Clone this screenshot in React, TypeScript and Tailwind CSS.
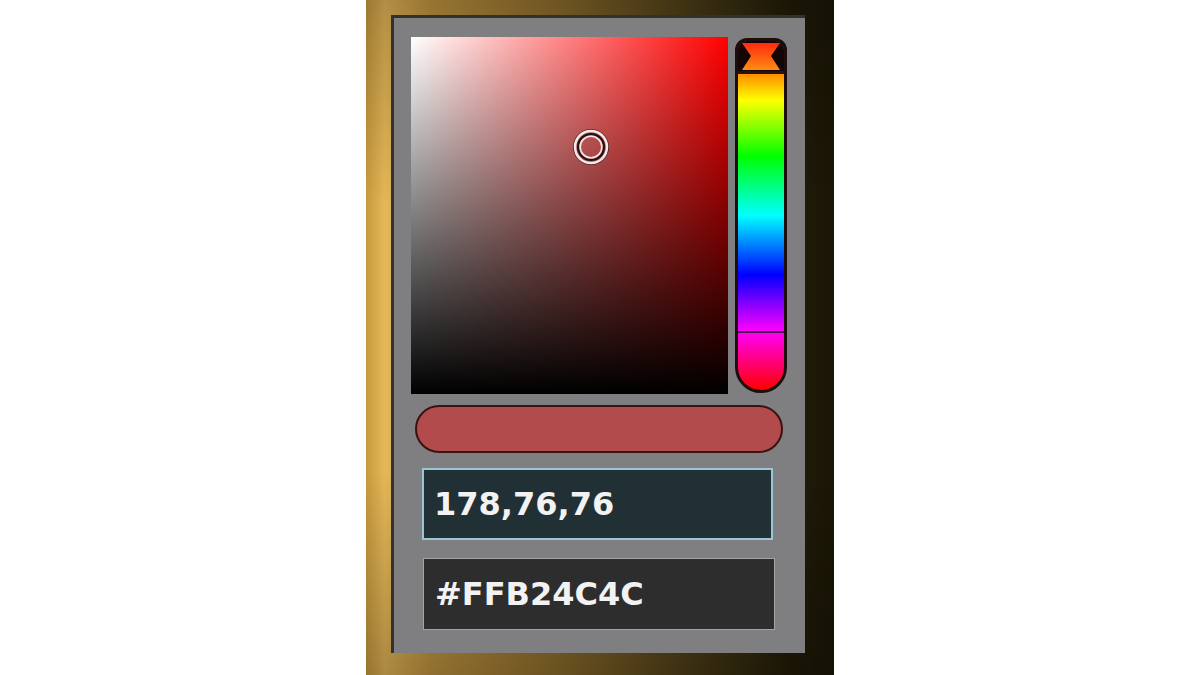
import React from "react";

const ColorPicker = () => {
  return (
    <div className="flex w-[468px] h-[675px] pt-[15px] pl-[25px] bg-[linear-gradient(180deg,rgba(0,0,0,0.22)_0%,rgba(0,0,0,0)_30%,rgba(0,0,0,0)_70%,rgba(0,0,0,0.25)_100%),linear-gradient(90deg,#c8993e_0%,#e4b757_4%,#c09440_14%,#8f6e2c_40%,#4a3c16_70%,#221c08_90%,#1a1606_100%)]">
      <div className="flex flex-col w-[414px] h-[638px] bg-[#7f7f81] border-t-[3px] border-l-[3px] border-[#35302a] pl-[17px] pt-[19px]">
        <div className="flex items-start">
          {/* saturation / value square */}
          <div className="relative w-[317px] h-[357px] bg-[linear-gradient(0deg,#000_0%,rgba(0,0,0,0)_100%),linear-gradient(90deg,#fff_0%,#f00_100%)]">
            <svg
              className="absolute left-[161px] top-[91px]"
              width="38"
              height="38"
              viewBox="0 0 38 38"
            >
              <circle cx="19" cy="19" r="17.5" fill="none" stroke="#3a2020" strokeWidth="1" />
              <circle cx="19" cy="19" r="16" fill="none" stroke="#f4e8e8" strokeWidth="2.5" />
              <circle cx="19" cy="19" r="13" fill="none" stroke="#1e1414" strokeWidth="2" />
              <circle cx="19" cy="19" r="10.8" fill="none" stroke="#f4e8e8" strokeWidth="1.6" />
            </svg>
          </div>
          {/* hue strip */}
          <div className="relative ml-[7px] mt-[1px] w-[52px] h-[355px] overflow-hidden rounded-t-[12px] rounded-b-[26px] border-[3px] border-[#1e0d0d] bg-[linear-gradient(180deg,#f00_0%,#ff0_17%,#0f0_33%,#0ff_50%,#00f_67%,#f0f_83%,#f00_100%)]">
            <svg className="absolute left-0 top-0" width="46" height="33" viewBox="0 0 46 33">
              <defs>
                <linearGradient id="thumb" x1="0" y1="0" x2="0" y2="1">
                  <stop offset="0" stopColor="#ff2a10" />
                  <stop offset="1" stopColor="#ff8c12" />
                </linearGradient>
              </defs>
              <rect x="0" y="0" width="46" height="33" fill="#140606" />
              <polygon points="4,2 42,2 33,15 42,29 4,29 13,15" fill="url(#thumb)" />
              <rect x="0" y="30" width="46" height="3" fill="#2a1208" />
            </svg>
            <div className="absolute left-0 top-[290px] w-full h-[2px] bg-[#4a0f4a]" />
          </div>
        </div>

        {/* current colour */}
        <div className="mt-[11px] ml-[4px] w-[368px] h-[48px] rounded-full border-2 border-[#3a1212] bg-[#b24c4c]" />

        {/* rgb field */}
        <div className="mt-[15px] ml-[11px] flex items-center w-[351px] h-[72px] border-2 border-[#9cc4d2] bg-[#213035] pl-[10px] font-['DejaVu_Sans',sans-serif] font-bold text-[32px] text-[#f2f2f2]">
          178,76,76
        </div>

        {/* hex field */}
        <div className="mt-[18px] ml-[12px] flex items-center w-[352px] h-[72px] border border-[#a4a4a4] bg-[#2d2d2e] pl-[11px] font-['DejaVu_Sans',sans-serif] font-bold text-[32px] text-[#f2f2f2]">
          #FFB24C4C
        </div>
      </div>
    </div>
  );
};

export default function App() {
  return (
    <div className="flex justify-center w-[1200px] h-[675px] bg-white">
      <ColorPicker />
    </div>
  );
}
